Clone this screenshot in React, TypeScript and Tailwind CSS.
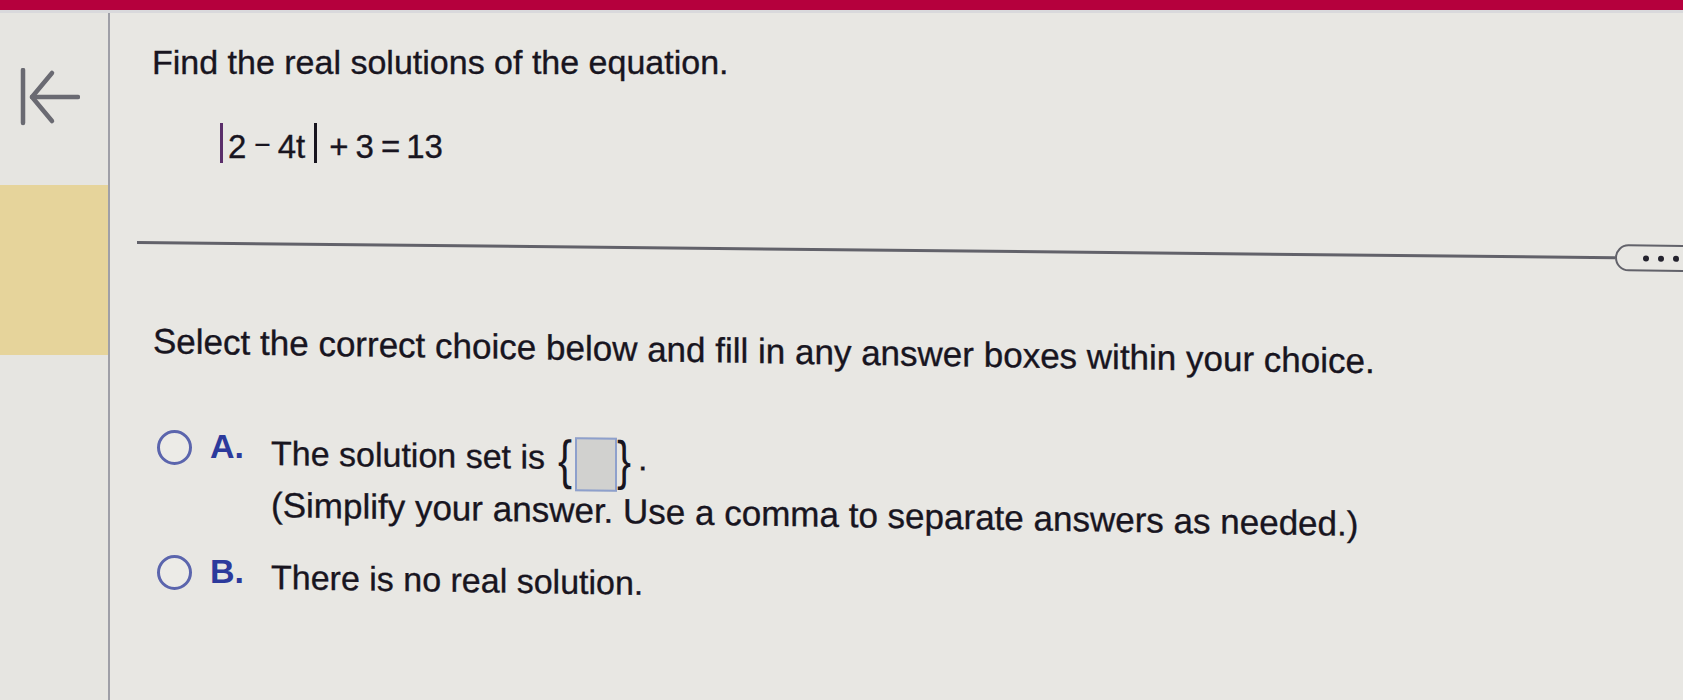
import React from "react";

const font = { fontFamily: '"Liberation Sans", Arial, Helvetica, sans-serif' };

function Radio() {
  return <div className="w-[35px] h-[35px] rounded-full border-[3.5px] border-[#5b65ad] bg-[#ecebe7] shrink-0" />;
}

function Bar({ color }: { color: string }) {
  return <span className="inline-block w-[3px] h-[40px] align-[-5px]" style={{ backgroundColor: color }} />;
}

export default function App() {
  return (
    <div
      className="w-full h-[700px] bg-[#e8e7e3] flex flex-col overflow-hidden text-[#18151f] [-webkit-text-stroke:0.35px_#18151f]"
      style={font}
    >
      <div className="h-[10px] bg-[#b5003d] shrink-0" />
      <div className="h-[3px] bg-[#d9d9dc] shrink-0" />
      <div className="flex flex-1 min-h-0">
        <aside className="w-[110px] shrink-0 border-r-2 border-[#9f9fa7] bg-[#e6e5e1] flex flex-col">
          <div className="mt-[55px] ml-[18px]">
            <svg width="62" height="58" viewBox="0 0 62 58" fill="none" stroke="#6a6a72" strokeWidth="4.5" strokeLinecap="round" strokeLinejoin="round">
              <line x1="5" y1="2" x2="5" y2="55" />
              <line x1="14" y1="29" x2="60" y2="29" />
              <polyline points="34,5 14,29 34,53" />
            </svg>
          </div>
          <div className="mt-[59px] h-[170px] bg-[#e6d49b]" />
        </aside>
        <main className="flex-1 min-w-0 pl-[42px] flex flex-col">
          <div className="mt-[29px] text-[34px] leading-[40px] whitespace-nowrap">Find the real solutions of the equation.</div>
          <div className="mt-[39px] ml-[68px] text-[33px] leading-[48px] h-[48px] whitespace-nowrap">
            <Bar color="#5a2e6a" />
            <span className="ml-[5px]">2</span>
            <span className="ml-[8px] text-[28px] align-[4px]">−</span>
            <span className="ml-[7px]">4t</span>
            <span className="ml-[9px]"><Bar color="#18151f" /></span>
            <span className="ml-[12px]">+</span>
            <span className="ml-[7px]">3</span>
            <span className="ml-[7px]">=</span>
            <span className="ml-[6px]">13</span>
          </div>
          <div className="mt-[60px] -ml-[15px] flex items-center -mr-[30px] skew-y-[0.59deg] origin-left">
            <div className="flex-1 h-[2.5px] bg-[#62626a]" />
            <div className="w-[98px] h-[27px] rounded-full border-[2.5px] border-[#62626a] flex items-center gap-[9px] pl-[26px]">
              <span className="w-[6px] h-[6px] rounded-full bg-[#24232e]" />
              <span className="w-[6px] h-[6px] rounded-full bg-[#24232e]" />
              <span className="w-[6px] h-[6px] rounded-full bg-[#24232e]" />
            </div>
          </div>
          <div className="mt-[65px] ml-[1px] text-[35px] leading-[40px] whitespace-nowrap skew-y-[0.95deg] origin-left">
            Select the correct choice below and fill in any answer boxes within your choice.
          </div>
          <div className="mt-[64px] ml-[5px] flex items-start">
            <div className="mt-[5px]"><Radio /></div>
            <div className="ml-[18px] w-[61px] pt-[1px] text-[34px] leading-[40px] font-bold text-[#2c3a9c] [-webkit-text-stroke:0px]">A.</div>
            <div className="flex flex-col">
              <div className="h-[56px] flex items-center text-[34px] whitespace-nowrap skew-y-[0.8deg] origin-left">
                <span>The solution set is</span>
                <span className="self-start mt-[10px] ml-[13px] inline-block text-[42px] leading-none scale-y-[1.28] [-webkit-text-stroke:0px]">{"{"}</span>
                <span className="self-start mt-[8px] ml-[3px] w-[42px] h-[54px] bg-[#d1d1cf] border-2 border-[#8ea0cc]" />
                <span className="self-start mt-[10px] ml-[0px] inline-block text-[42px] leading-none scale-y-[1.28] [-webkit-text-stroke:0px]">{"}"}</span>
                <span className="ml-[7px]">.</span>
              </div>
              <div className="mt-[6px] text-[35px] leading-[36px] whitespace-nowrap skew-y-[1deg] origin-left">
                (Simplify your answer. Use a comma to separate answers as needed.)
              </div>
            </div>
          </div>
          <div className="mt-[34px] ml-[5px] flex items-start">
            <div className="-mt-[2px]"><Radio /></div>
            <div className="-mt-[6px] ml-[18px] w-[61px] text-[34px] leading-[40px] font-bold text-[#2c3a9c] [-webkit-text-stroke:0px]">B.</div>
            <div className="h-[40px] flex items-center text-[34px] whitespace-nowrap skew-y-[0.9deg] origin-left">There is no real solution.</div>
          </div>
        </main>
      </div>
    </div>
  );
}
